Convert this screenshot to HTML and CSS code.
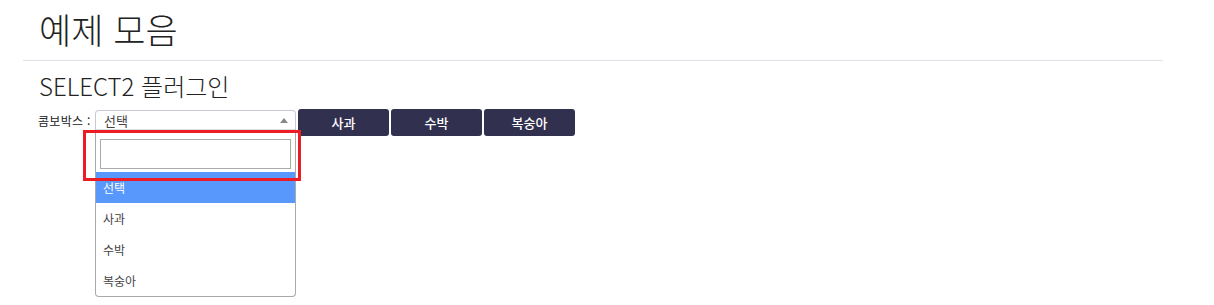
FILE: index.html
```html
<!DOCTYPE html>
<html lang="ko">
<head>
<meta charset="utf-8">
<title>예제 모음</title>
<link rel="stylesheet" href="styles.css">
</head>
<body>
<div class="page">
  <h1 class="title">예제 모음</h1>
  <h2 class="subtitle">SELECT2 플러그인</h2>
  <div class="row">
    <label class="label">콤보박스 :</label>
    <div class="select-wrap">
      <div class="select">
        <span class="select-text">선택</span>
        <span class="arrow"></span>
      </div>
      <div class="dropdown">
        <div class="search-box"><input class="search" type="text"></div>
        <ul class="options">
          <li class="option active">선택</li>
          <li class="option">사과</li>
          <li class="option">수박</li>
          <li class="option">복숭아</li>
        </ul>
      </div>
      <div class="annotation"></div>
    </div>
    <div class="buttons">
      <button class="btn">사과</button>
      <button class="btn">수박</button>
      <button class="btn">복숭아</button>
    </div>
  </div>
</div>
</body>
</html>
```

FILE: styles.css
```css
* { box-sizing: border-box; }
html, body {
  margin: 0;
  padding: 0;
  background: #fff;
  font-family: "Noto Sans CJK KR", "Noto Sans", sans-serif;
  color: #222;
}
body {
  min-height: 305px;
}
.page {
  width: 1140px;
  margin-left: 23px;
  min-height: 305px;
}
.title {
  margin: 0;
  padding: 0 16px;
  font-size: 35px;
  font-weight: 300;
  line-height: 58px;
  height: 61px;
  border-bottom: 1px solid #e2dfe9;
  color: #222;
}
.subtitle {
  margin: 0;
  padding: 7px 16px 0;
  font-size: 24px;
  font-weight: 300;
  line-height: 36px;
  color: #222;
}
.row {
  display: flex;
  align-items: flex-start;
  padding-left: 15px;
  margin-top: 5px;
}
.label {
  font-size: 12px;
  line-height: 14px;
  margin-top: 5px;
  width: 57px;
  color: #222;
  letter-spacing: 0.3px;
}
.select-wrap {
  position: relative;
  width: 201px;
  margin-top: 1px;
}
.select {
  height: 20px;
  border: 1px solid #c9c9d3;
  border-bottom: none;
  border-radius: 4px 4px 0 0;
  display: flex;
  align-items: center;
  padding: 0 8px;
  justify-content: space-between;
}
.select-text {
  font-size: 13px;
  color: #444;
  line-height: 18px;
}
.arrow {
  width: 0;
  height: 0;
  border-left: 4px solid transparent;
  border-right: 4px solid transparent;
  border-bottom: 5px solid #888;
  margin-right: -1px;
}
.dropdown {
  position: absolute;
  top: 19px;
  left: 0;
  width: 201px;
  height: 168px;
  border: 1px solid #aaa;
  border-top: 1px solid #ddd;
  border-radius: 0 0 4px 4px;
  background: #fff;
  z-index: 2;
}
.search-box {
  padding: 9px 4px 3px 4px;
}
.search {
  display: block;
  width: 191px;
  height: 30px;
  border: 1px solid #aaa;
  padding: 0;
  margin: 0;
  outline: none;
}
.options {
  list-style: none;
  margin: 0;
  padding: 0;
}
.option {
  height: 31px;
  line-height: 31px;
  padding-left: 7px;
  font-size: 12px;
  color: #444;
}
.option.active {
  background: #5897fb;
  color: #fff;
}
.annotation {
  position: absolute;
  top: 20px;
  left: -12px;
  width: 218px;
  height: 51px;
  border: 3px solid #ec1c24;
  z-index: 3;
}
.buttons {
  display: flex;
  gap: 2px;
  margin-left: 2px;
}
.btn {
  width: 91px;
  height: 27px;
  border: none;
  border-radius: 3px;
  background: #32304f;
  color: #fff;
  font-family: "Noto Sans CJK KR", "Noto Sans", sans-serif;
  font-size: 13px;
  font-weight: 500;
  padding: 0;
}
```
